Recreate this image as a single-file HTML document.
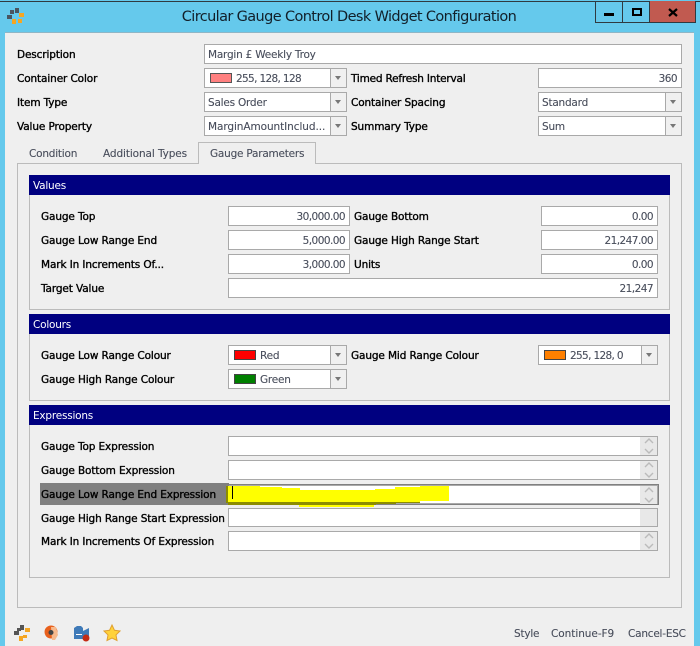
<!DOCTYPE html>
<html><head><meta charset="utf-8"><style>
html,body{margin:0;padding:0;width:700px;height:646px;overflow:hidden;background:#65c9ec}
*{box-sizing:border-box}
#r{position:relative;width:700px;height:646px;overflow:hidden;font-family:"DejaVu Sans","Liberation Sans",sans-serif;font-size:10.5px;letter-spacing:-.22px}
#r div,#r svg{position:absolute}
.l{color:#000;white-space:nowrap;line-height:14px;height:14px;margin-top:1px;letter-spacing:-.12px;-webkit-text-stroke:.35px #000}
.t{color:#474c5a;white-space:nowrap;line-height:14px;height:14px;margin-top:1px;-webkit-text-stroke:.1px #474c5a}
.i{background:#fff;border:1px solid #a9a9a9;height:20px;color:#474c5a;line-height:20px;padding:0 3px;white-space:nowrap;-webkit-text-stroke:.1px #474c5a}
.n{text-align:right;letter-spacing:-.55px;padding-right:4px}
.c{letter-spacing:-.65px}
.b{width:17px;height:20px;background:#f0f0f0;border:1px solid #a9a9a9}
.b:after{content:"";position:absolute;left:4px;top:7px;border-left:3.5px solid transparent;border-right:3.5px solid transparent;border-top:4px solid #777}
.h{background:#000080;color:#fff;height:20px;line-height:22px;padding-left:4px;left:29px;width:641px;font-size:10.5px}
.g{left:29px;width:641px;border:1px solid #bbb;background:#efefef}
.s{background:#e8e8e8;width:17px;height:18px}
</style></head><body><div id="r">
<div style="left:0;top:1px;width:700px;height:1px;background:#2f3a40"></div>
<div style="left:5px;top:32px;width:689px;height:614px;background:#efefef;border-top:1px solid #8fb6c6"></div>
<svg style="left:6px;top:7px" width="20" height="20" viewBox="0 0 20 20"><rect x="1" y="8" width="5" height="4" fill="#4a5560"/><rect x="4" y="3" width="4" height="4" fill="#4a5560"/><rect x="9" y="1" width="4" height="5" fill="#4a5560"/><rect x="13" y="6" width="5" height="4" fill="#f5a623"/><rect x="12" y="12" width="4" height="4" fill="#f5a623"/><rect x="6" y="12" width="4" height="5" fill="#f5a623"/></svg>
<div style="left:-1px;top:8px;width:700px;text-align:center;font:14.5px/18px 'DejaVu Sans',sans-serif;letter-spacing:-.62px;color:#12202a">Circular Gauge Control Desk Widget Configuration</div>
<div style="left:595px;top:1px;width:28px;height:22px;border:1px solid #2f3a40;border-top:0"></div>
<div style="left:623px;top:1px;width:27px;height:22px;border:1px solid #2f3a40;border-top:0;border-left:0"></div>
<div style="left:650px;top:1px;width:46px;height:22px;background:#c15a50;border:1px solid #2f3a40;border-top:0;border-left:0"></div>
<div style="left:604px;top:13px;width:10px;height:3px;background:#000"></div>
<div style="left:632px;top:8px;width:10px;height:8px;border:2px solid #000"></div>
<svg style="left:668px;top:8px" width="10" height="9" viewBox="0 0 10 9"><path d="M1 1L9 8M9 1L1 8" stroke="#000" stroke-width="2.2" fill="none"/></svg>

<div class="l" style="left:17px;top:47px">Description</div>
<div class="l" style="left:17px;top:71px">Container Color</div>
<div class="l" style="left:17px;top:95px">Item Type</div>
<div class="l" style="left:17px;top:119px">Value Property</div>
<div class="l" style="left:351px;top:71px;letter-spacing:-.2px">Timed Refresh Interval</div>
<div class="l" style="left:351px;top:95px">Container Spacing</div>
<div class="l" style="left:351px;top:119px">Summary Type</div>

<div class="i" style="left:204px;top:44px;width:478px">Margin £ Weekly Troy</div>
<div class="i c" style="left:204px;top:68px;width:127px;padding-left:31px">255, 128, 128</div>
<div style="left:210px;top:73px;width:22px;height:10px;background:#ff8080;border:1px solid #555"></div>
<div class="b" style="left:330px;top:68px"></div>
<div class="i" style="left:204px;top:92px;width:127px">Sales Order</div>
<div class="b" style="left:330px;top:92px"></div>
<div class="i" style="left:204px;top:116px;width:127px;letter-spacing:-.08px">MarginAmountInclud...</div>
<div class="b" style="left:330px;top:116px"></div>
<div class="i n" style="left:538px;top:68px;width:144px">360</div>
<div class="i" style="left:538px;top:92px;width:128px">Standard</div>
<div class="b" style="left:665px;top:92px"></div>
<div class="i" style="left:538px;top:116px;width:128px">Sum</div>
<div class="b" style="left:665px;top:116px"></div>

<div style="left:17px;top:163px;width:665px;height:445px;border:1px solid #bbb;background:#efefef"></div>
<div style="left:198px;top:142px;width:118px;height:22px;border:1px solid #bbb;border-bottom:0;background:#efefef"></div>
<div class="t" style="left:29px;top:146px">Condition</div>
<div class="t" style="left:103px;top:146px;letter-spacing:-.1px">Additional Types</div>
<div class="t" style="left:210px;top:146px">Gauge Parameters</div>

<div class="g" style="top:175px;height:135px"></div>
<div class="h" style="top:175px">Values</div>
<div class="l" style="left:41px;top:209px">Gauge Top</div>
<div class="l" style="left:41px;top:233px">Gauge Low Range End</div>
<div class="l" style="left:41px;top:257px">Mark In Increments Of...</div>
<div class="l" style="left:41px;top:281px">Target Value</div>
<div class="l" style="left:354px;top:209px">Gauge Bottom</div>
<div class="l" style="left:354px;top:233px">Gauge High Range Start</div>
<div class="l" style="left:354px;top:257px">Units</div>
<div class="i n" style="left:228px;top:206px;width:122px">30,000.00</div>
<div class="i n" style="left:228px;top:230px;width:122px">5,000.00</div>
<div class="i n" style="left:228px;top:254px;width:122px">3,000.00</div>
<div class="i n" style="left:228px;top:278px;width:430px">21,247</div>
<div class="i n" style="left:541px;top:206px;width:117px">0.00</div>
<div class="i n" style="left:541px;top:230px;width:117px">21,247.00</div>
<div class="i n" style="left:541px;top:254px;width:117px">0.00</div>

<div class="g" style="top:314px;height:87px"></div>
<div class="h" style="top:314px">Colours</div>
<div class="l" style="left:41px;top:348px">Gauge Low Range Colour</div>
<div class="l" style="left:41px;top:372px">Gauge High Range Colour</div>
<div class="l" style="left:351px;top:348px">Gauge Mid Range Colour</div>
<div class="i" style="left:228px;top:345px;width:103px;padding-left:31px">Red</div>
<div style="left:234px;top:350px;width:22px;height:10px;background:#f00;border:1px solid #444"></div>
<div class="b" style="left:330px;top:345px"></div>
<div class="i" style="left:228px;top:369px;width:103px;padding-left:31px">Green</div>
<div style="left:234px;top:374px;width:22px;height:10px;background:#008000;border:1px solid #444"></div>
<div class="b" style="left:330px;top:369px"></div>
<div class="i c" style="left:538px;top:345px;width:104px;padding-left:31px">255, 128, 0</div>
<div style="left:544px;top:350px;width:22px;height:10px;background:#ff8000;border:1px solid #444"></div>
<div class="b" style="left:641px;top:345px"></div>

<div class="g" style="top:405px;height:173px"></div>
<div class="h" style="top:405px">Expressions</div>
<div style="left:40px;top:483px;width:189px;height:22px;background:#808080"></div>
<div class="l" style="left:41px;top:439px">Gauge Top Expression</div>
<div class="l" style="left:41px;top:463px">Gauge Bottom Expression</div>
<div class="l" style="left:41px;top:487px">Gauge Low Range End Expression</div>
<div class="l" style="left:41px;top:511px">Gauge High Range Start Expression</div>
<div class="l" style="left:41px;top:534px">Mark In Increments Of Expression</div>
<div class="i" style="left:228px;top:436px;width:430px"></div>
<div class="i" style="left:228px;top:460px;width:430px"></div>
<div class="i" style="left:228px;top:484px;width:431px;height:21px;border:1px solid #808080;box-shadow:inset 0 0 0 1px #a9a9a9"></div>
<div class="i" style="left:228px;top:508px;width:430px;height:19px"></div>
<div class="i" style="left:228px;top:531px;width:430px"></div>
<div class="s" style="left:640px;top:437px"></div>
<div class="s" style="left:640px;top:461px"></div>
<div class="s" style="left:640px;top:486px"></div>
<div class="s" style="left:640px;top:509px;height:17px"></div>
<div class="s" style="left:640px;top:532px"></div>
<svg style="left:640px;top:437px" width="17" height="115" viewBox="0 0 17 115" fill="none" stroke="#bbb" stroke-width="1.4"><path d="M5 6l4-4 4 4M5 12l4 4 4-4M5 30l4-4 4 4M5 36l4 4 4-4M5 55l4-4 4 4M5 61l4 4 4-4M5 101l4-4 4 4M5 107l4 4 4-4"/></svg>
<svg style="left:226px;top:484px" width="226" height="24" viewBox="0 0 226 24" shape-rendering="crispEdges"><path d="M2 2H34V3H56V4H74V6H149V5H169V3H194V2H223V17H194V18H2Z" fill="#ff0"/><path d="M0 2H2V19H0ZM2 18H194V19H170V20H150V21H2Z" fill="#8c8c00"/><path d="M73 21H148V23H73Z" fill="#ff0"/></svg>
<div style="left:232px;top:486px;width:1px;height:13px;background:#000"></div>

<svg style="left:13px;top:624px" width="18" height="18" viewBox="0 0 18 18"><rect x="1" y="7" width="5" height="4" fill="#555"/><rect x="7" y="1" width="4" height="5" fill="#555"/><rect x="4" y="4" width="4" height="3" fill="#555"/><rect x="12" y="4" width="5" height="4" fill="#f5a623"/><rect x="10" y="11" width="4" height="3" fill="#f5a623"/><rect x="6" y="12" width="4" height="5" fill="#f5a623"/></svg>
<svg style="left:44px;top:624px" width="16" height="18" viewBox="0 0 16 18"><circle cx="7" cy="8" r="6.5" fill="#e8601c"/><path d="M7 3h5l2 8-3 5H8z" fill="#f7b98c"/><circle cx="7" cy="8.500" r="2.500" fill="#444"/></svg>
<svg style="left:73px;top:624px" width="18" height="18" viewBox="0 0 18 18"><path d="M1 4l3-2h4l2 2v11H1z" fill="#3f7ab8"/><path d="M10 7l6-3v8h-6z" fill="#3f7ab8"/><rect x="3" y="10" width="6" height="1" fill="#fff"/><circle cx="13" cy="14" r="3.500" fill="#c42b14"/></svg>
<svg style="left:103px;top:624px" width="18" height="18" viewBox="0 0 18 18"><path d="M9 1l2.500 5.300 5.500.7-4 3.900 1 5.600L9 14l-5 2.500 1-5.600L1 7l5.500-.7z" fill="#ffd23a" stroke="#e0a030"/></svg>
<div class="t" style="left:514px;top:626px">Style</div>
<div class="t" style="left:551px;top:626px;letter-spacing:-.05px">Continue-F9</div>
<div class="t" style="left:628px;top:626px">Cancel-ESC</div>
</div></body></html>
